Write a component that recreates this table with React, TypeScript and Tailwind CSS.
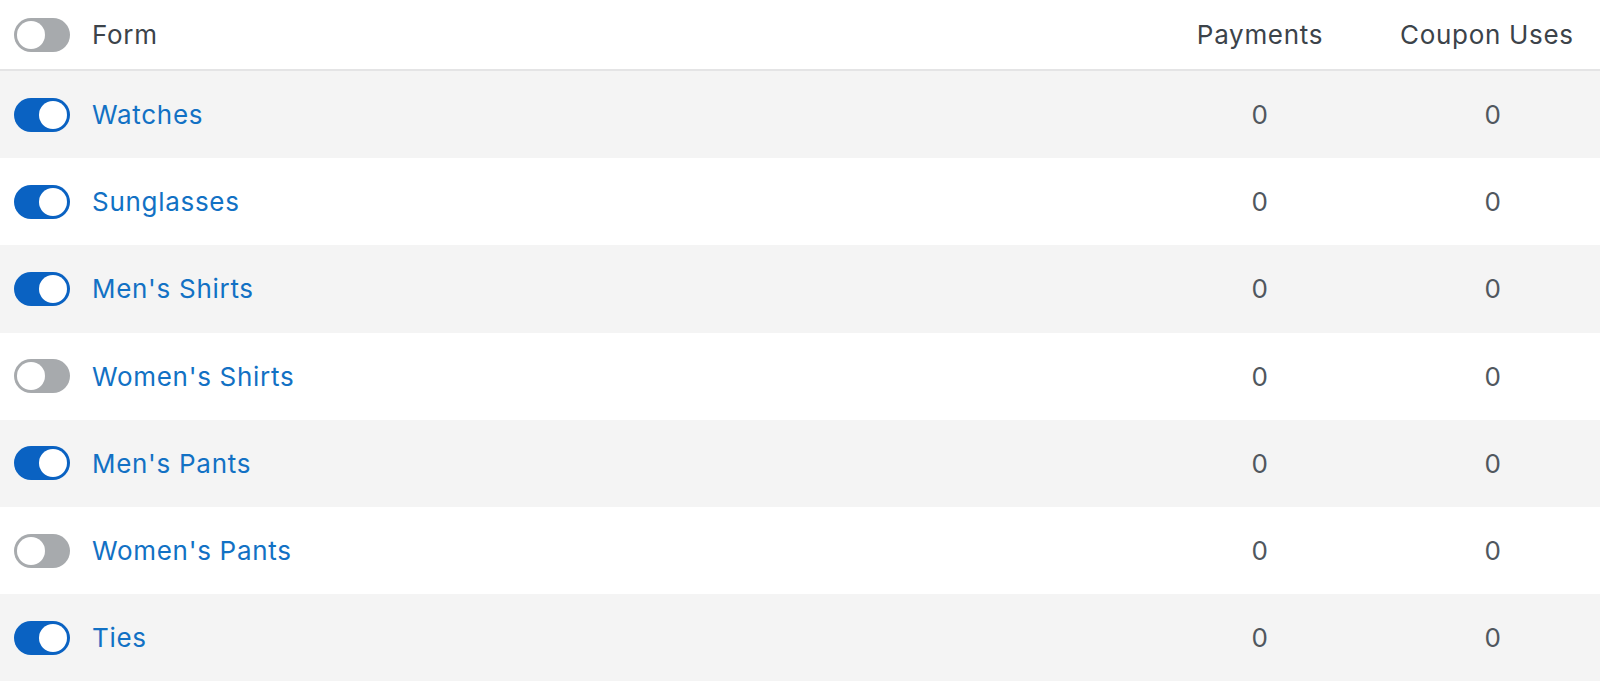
import React, { useState } from "react";

type Row = { name: string; on: boolean; payments: number; coupons: number };

const initialRows: Row[] = [
  { name: "Watches", on: true, payments: 0, coupons: 0 },
  { name: "Sunglasses", on: true, payments: 0, coupons: 0 },
  { name: "Men's Shirts", on: true, payments: 0, coupons: 0 },
  { name: "Women's Shirts", on: false, payments: 0, coupons: 0 },
  { name: "Men's Pants", on: true, payments: 0, coupons: 0 },
  { name: "Women's Pants", on: false, payments: 0, coupons: 0 },
  { name: "Ties", on: true, payments: 0, coupons: 0 },
];

const Toggle = ({ on, onClick }: { on: boolean; onClick: () => void }) => (
  <button
    type="button"
    onClick={onClick}
    className={
      on
        ? "flex h-[34px] w-[56px] shrink-0 items-center justify-end rounded-full bg-[#0a62c2] p-[3px]"
        : "flex h-[34px] w-[56px] shrink-0 items-center justify-start rounded-full bg-[#a7aaad] p-[3px]"
    }
  >
    <span className="block h-[28px] w-[28px] rounded-full bg-white" />
  </button>
);

export default function App() {
  const [rows, setRows] = useState(initialRows);
  const [all, setAll] = useState(false);

  const flip = (i: number) =>
    setRows((r) => r.map((row, j) => (j === i ? { ...row, on: !row.on } : row)));

  return (
    <div className="min-h-screen w-full bg-white font-['Inter',sans-serif] text-[26px] tracking-[0.7px]">
      <div className="flex h-[71px] items-center border-b-2 border-[#e4e4e5] pl-[14px] text-[#3c434a]">
        <Toggle on={all} onClick={() => setAll(!all)} />
        <span className="ml-[22px] flex-1">Form</span>
        <span className="w-[160px] text-center">Payments</span>
        <span className="ml-[60px] w-[186px]">Coupon Uses</span>
        <span className="w-[14px]" />
      </div>
      {rows.map((row, i) => (
        <div
          key={row.name}
          className={
            i % 2 === 0
              ? "flex h-[87.2px] items-center bg-[#f4f4f4] pl-[14px]"
              : "flex h-[87.2px] items-center bg-white pl-[14px]"
          }
        >
          <Toggle on={row.on} onClick={() => flip(i)} />
          <a href="#" className="ml-[22px] flex-1 text-[#1271c4]">
            {row.name}
          </a>
          <span className="w-[160px] text-center text-[#50575e]">{row.payments}</span>
          <span className="ml-[60px] w-[186px] text-center text-[#50575e]">{row.coupons}</span>
          <span className="w-[14px]" />
        </div>
      ))}
    </div>
  );
}
